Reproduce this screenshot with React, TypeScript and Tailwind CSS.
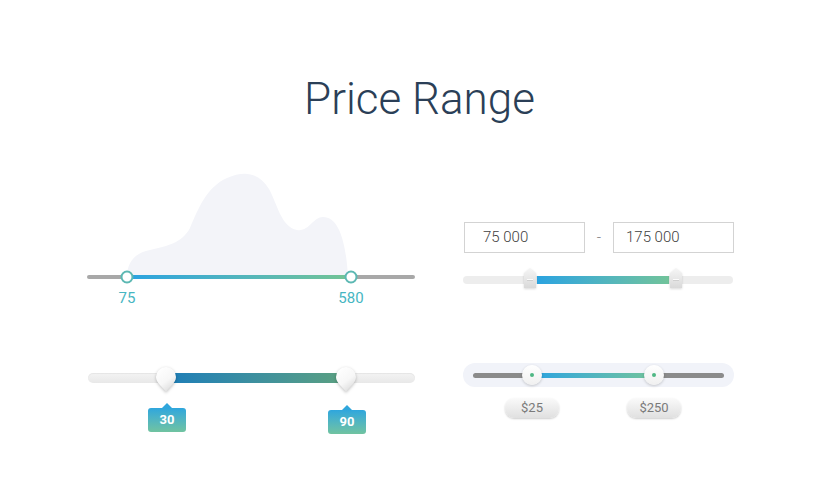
import React from 'react';

const mountain = { width: 328, lo: 40, hi: 264, labels: ['75', '580'] };
const boxed = { width: 270, lo: 67, hi: 213, from: '75 000', to: '175 000' };
const pins = [
  { value: '30', x: 78, dy: 0 },
  { value: '90', x: 258, dy: 2 },
];
const pill = { lo: 69, hi: 191, labels: ['$25', '$250'] };

function MountainSlider() {
  const { width, lo, hi, labels } = mountain;
  return (
    <div className="relative" style={{ width }}>
      <svg width={width} height="111" className="block">
        <path
          d="M40 111 C40 96 48 87 63 84 C80 80 95 77 103 62 C112 41 120 21 140 12 C158 4 172 7 182 23 C190 37 194 61 210 64 C222 66 226 51 236 51 C252 51 259 76 261 111 Z"
          fill="#f3f4f9"
        />
      </svg>
      <div className="relative -mt-[2px] h-1 rounded-full bg-[#a8a8a8]">
        <div
          className="absolute inset-y-0 bg-linear-to-r from-[#29a2e1] to-[#73c494]"
          style={{ left: lo, width: hi - lo }}
        />
        {[lo, hi].map((x) => (
          <div
            key={x}
            className="absolute top-1/2 h-[13px] w-[13px] -translate-x-1/2 -translate-y-1/2 rounded-full border-2 border-[#5cb8b3] bg-white"
            style={{ left: x }}
          />
        ))}
      </div>
      <div className="relative mt-[12px] h-[16px]">
        {[lo, hi].map((x, i) => (
          <span
            key={x}
            className="absolute top-0 -translate-x-1/2 text-[15px] leading-none text-[#47b6c2]"
            style={{ left: x }}
          >
            {labels[i]}
          </span>
        ))}
      </div>
    </div>
  );
}

function ShieldHandle() {
  return (
    <svg width="14" height="22" viewBox="0 0 14 22" className="drop-shadow-[0_1px_1px_rgba(0,0,0,0.15)]">
      <defs>
        <linearGradient id="sh" x1="0" y1="0" x2="0" y2="1">
          <stop offset="0" stopColor="#f6f6f6" />
          <stop offset="1" stopColor="#d9d9d9" />
        </linearGradient>
      </defs>
      <path d="M1 6 L7 1 L13 6 L13 21 L1 21 Z" fill="url(#sh)" />
      <path d="M4 12.5 H10" stroke="#fbfbfb" strokeWidth="1" />
      <path d="M4 13.5 H10" stroke="#cfcfcf" strokeWidth="1" />
    </svg>
  );
}

function BoxedSlider() {
  const { width, lo, hi } = boxed;
  return (
    <div className="pt-[56px]">
      <div className="ml-px flex items-center text-[15px] font-light text-[#3f3f3f]">
        <div className="flex h-[31px] w-[121px] items-center border border-[#d3d3d3] pl-[18px]">{boxed.from}</div>
        <div className="w-[28px] text-center text-[#777]">-</div>
        <div className="flex h-[31px] w-[121px] items-center border border-[#d3d3d3] pl-[12px]">{boxed.to}</div>
      </div>
      <div className="relative mt-[23px] h-2 rounded-full bg-[#ededed]" style={{ width }}>
        <div
          className="absolute inset-y-0 bg-linear-to-r from-[#2aa3e0] to-[#71c39a]"
          style={{ left: lo + 7, width: hi - lo - 14 }}
        />
        {[lo, hi].map((x) => (
          <div key={x} className="absolute top-[-9px] -translate-x-1/2" style={{ left: x }}>
            <ShieldHandle />
          </div>
        ))}
      </div>
    </div>
  );
}

function PinHandle() {
  return (
    <svg width="24" height="27" viewBox="0 0 24 27" className="drop-shadow-[0_1px_1.5px_rgba(0,0,0,0.25)]">
      <defs>
        <linearGradient id="pin" x1="0.2" y1="0" x2="0.8" y2="1">
          <stop offset="0" stopColor="#ffffff" />
          <stop offset="0.55" stopColor="#f7f7f7" />
          <stop offset="1" stopColor="#d8d8d8" />
        </linearGradient>
      </defs>
      <path d="M12 26 C9 21 2 17 2 11 A10 10 0 0 1 22 11 C22 17 15 21 12 26 Z" fill="url(#pin)" />
    </svg>
  );
}

function PinSlider() {
  return (
    <div className="ml-px w-[327px] pt-[10px]">
      <div className="relative h-[10px] rounded-full bg-linear-to-b from-[#f4f4f4] to-[#e8e8e8] shadow-[inset_0_1px_1px_rgba(0,0,0,0.06)]">
        <div
          className="absolute inset-y-0 bg-linear-to-r from-[#1c7db8] to-[#5ba080]"
          style={{ left: pins[0].x, width: pins[1].x - pins[0].x }}
        />
        {pins.map((p) => (
          <div key={p.value} className="absolute top-[-7px] -translate-x-1/2" style={{ left: p.x }}>
            <PinHandle />
          </div>
        ))}
      </div>
      <div className="relative mt-[20px] h-[32px]">
        {pins.map((p) => (
          <div
            key={p.value}
            className="absolute flex -translate-x-1/2 flex-col items-center"
            style={{ left: p.x + 1, top: p.dy }}
          >
            <div className="h-0 w-0 border-x-[5px] border-b-[5px] border-x-transparent border-b-[#2fa6dc]" />
            <div className="flex h-[24px] w-[38px] items-center justify-center rounded-[3px] bg-linear-to-b from-[#2ea6dd] to-[#70c3a0] text-[13px] font-bold text-white">
              {p.value}
            </div>
          </div>
        ))}
      </div>
    </div>
  );
}

function PillSlider() {
  const { lo, hi, labels } = pill;
  return (
    <div className="w-[271px]">
      <div className="flex h-[24px] items-center rounded-full bg-[#f1f3f9] px-[10px]">
        <div className="relative h-[5px] flex-1 rounded-full bg-[#8b8b8b]">
          <div
            className="absolute inset-y-0 bg-linear-to-r from-[#2aa3e0] to-[#71c39a]"
            style={{ left: lo - 10, width: hi - lo }}
          />
          {[lo, hi].map((x) => (
            <div
              key={x}
              className="absolute top-1/2 flex h-[20px] w-[20px] -translate-x-1/2 -translate-y-1/2 items-center justify-center rounded-full bg-linear-to-b from-white to-[#f0f0f0] shadow-[0_1px_3px_rgba(0,0,0,0.2)]"
              style={{ left: x - 10 }}
            >
              <div className="h-[4px] w-[4px] rounded-full bg-[#4fb784]" />
            </div>
          ))}
        </div>
      </div>
      <div className="relative mt-[11px] h-[20px]">
        {[lo, hi].map((x, i) => (
          <div
            key={x}
            className="absolute top-0 flex h-[20px] w-[54px] -translate-x-1/2 items-center justify-center rounded-[9px] bg-linear-to-b from-[#fafafa] to-[#e0e0e0] text-[13px] text-[#7a7a7a] shadow-[0_1px_2px_rgba(0,0,0,0.2)]"
            style={{ left: x }}
          >
            {labels[i]}
          </div>
        ))}
      </div>
    </div>
  );
}

export default function App() {
  return (
    <div className="h-[500px] w-[839px] bg-white pt-[77px] font-['Roboto','Liberation_Sans',sans-serif]">
      <h1 className="text-center text-[44px] font-light leading-none text-[#2b3f57]">Price Range</h1>
      <div className="mt-[45px] flex h-[197px] gap-[48px] pl-[87px]">
        <MountainSlider />
        <BoxedSlider />
      </div>
      <div className="flex gap-[48px] pl-[87px]">
        <div className="w-[328px]">
          <PinSlider />
        </div>
        <PillSlider />
      </div>
    </div>
  );
}
